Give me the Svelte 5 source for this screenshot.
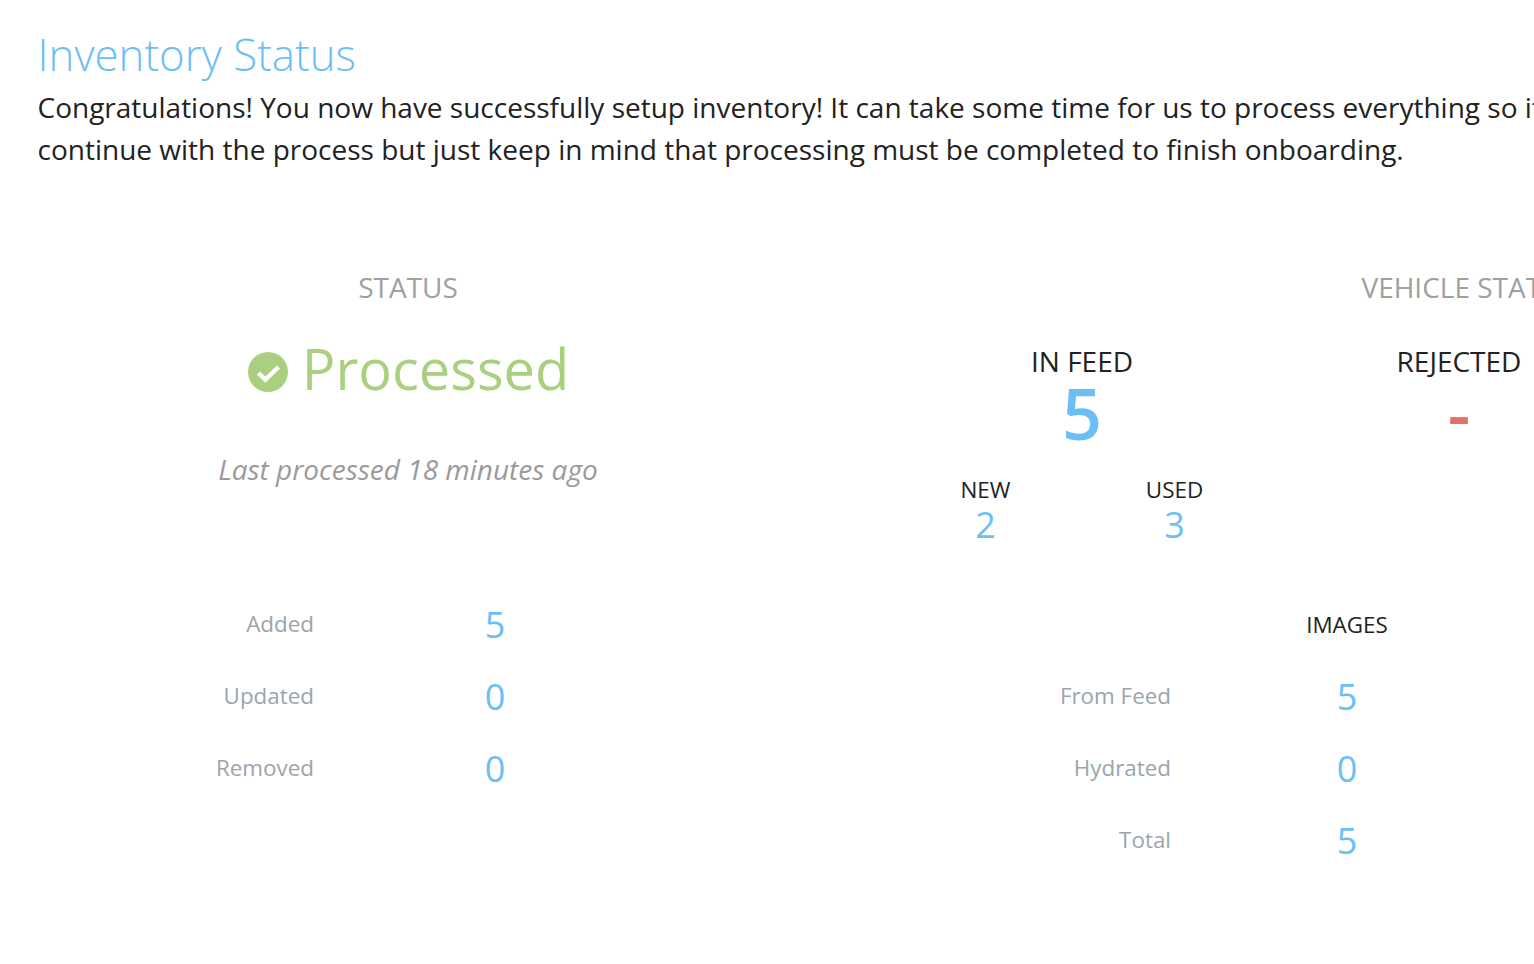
<script lang="ts">
  const summary = [
    { label: 'Added', value: 5 },
    { label: 'Updated', value: 0 },
    { label: 'Removed', value: 0 },
  ];
  const images = [
    { label: 'From Feed', value: 5 },
    { label: 'Hydrated', value: 0 },
    { label: 'Total', value: 5 },
  ];
</script>

<main class="page">
  <h1>Inventory Status</h1>
  <p class="intro">
    Congratulations! You now have successfully setup inventory! It can take some time for us to process everything so it may take a while. You can<br />
    continue with the process but just keep in mind that processing must be completed to finish onboarding.
  </p>

  <div class="columns">
    <section class="status">
      <h2>STATUS</h2>
      <div class="state">
        <svg viewBox="0 0 40 40" width="40" height="40" aria-hidden="true">
          <circle cx="20" cy="20" r="20" fill="#aad07f" />
          <path d="M10.5 21l6.8 6.6L30.5 15" fill="none" stroke="#fff" stroke-width="4.4" />
        </svg>
        <span>Processed</span>
      </div>
      <p class="last">Last processed 18 minutes ago</p>
      <div class="rows">
        {#each summary as row}
          <div class="row">
            <span class="label">{row.label}</span>
            <span class="value">{row.value}</span>
          </div>
        {/each}
      </div>
    </section>

    <section class="vehicles">
      <h2>VEHICLE STATS</h2>
      <div class="counts">
        <div class="count">
          <div class="name">IN FEED</div>
          <div class="big">5</div>
          <div class="split">
            <div><div class="small-name">NEW</div><div class="small">2</div></div>
            <div><div class="small-name">USED</div><div class="small">3</div></div>
          </div>
        </div>
        <div class="count">
          <div class="name">REJECTED</div>
          <div class="big red">-</div>
        </div>
      </div>
      <div class="images">
        <div class="images-title">IMAGES</div>
        {#each images as row}
          <div class="row">
            <span class="label">{row.label}</span>
            <span class="value">{row.value}</span>
          </div>
        {/each}
      </div>
    </section>
  </div>
</main>

<style>
  :global(body) {
    margin: 0;
    background: #fff;
    overflow: hidden;
  }

  .page {
    box-sizing: border-box;
    width: 2100px;
    height: 964px;
    padding: 27px 38px 0;
    font-family: "Open Sans", sans-serif;
    color: #222;
  }

  h1 {
    margin: 0 0 5px -0.5px;
    font-size: 43.8px;
    line-height: 54px;
    font-weight: 300;
    color: #6cbff5;
  }

  .intro {
    margin: 0 0 0 -0.5px;
    font-size: 28px;
    line-height: 42px;
    white-space: nowrap;
  }

  .columns {
    display: grid;
    grid-template-columns: 740px 1132px;
    column-gap: 115px;
    margin-top: 96px;
  }

  h2 {
    margin: 0;
    font-size: 28px;
    line-height: 42px;
    font-weight: 400;
    color: #a0a0a0;
    text-align: center;
  }

  .state {
    display: flex;
    justify-content: center;
    align-items: center;
    gap: 14px;
    margin-top: 23px;
    padding-left: 1px;
    font-size: 56px;
    line-height: 76px;
    font-weight: 400;
    color: #aad07f;
  }

  .state svg {
    margin-top: 6px;
  }

  .state span {
    position: relative;
    top: -1px;
  }

  .last {
    margin: 41px 0 0;
    text-align: center;
    font-size: 28px;
    line-height: 42px;
    font-style: italic;
    font-weight: 400;
    color: #9a9a9a;
  }

  .rows {
    margin-top: 98px;
  }

  .row {
    display: grid;
    grid-template-columns: 276px 362px;
    height: 72px;
    align-items: center;
  }

  .label {
    padding-bottom: 2px;
    text-align: right;
    font-size: 22.4px;
    color: #9aa5ad;
    font-weight: 400;
  }

  .value {
    text-align: center;
    font-size: 36px;
    font-weight: 400;
    color: #6cbff5;
  }

  .counts {
    display: grid;
    grid-template-columns: repeat(3, 377px);
    margin: 32px 0 0 0.5px;
  }

  .count {
    text-align: center;
  }

  .name {
    font-size: 28px;
    line-height: 42px;
    font-weight: 400;
  }

  .big {
    font-size: 70px;
    line-height: 62px;
    font-weight: 600;
    color: #6cbff5;
  }

  .big.red {
    color: #e76f63;
  }

  .split {
    display: grid;
    grid-template-columns: 1fr 1fr;
    margin: 31px 1.5px 0 -2.5px;
  }

  .small-name {
    font-size: 22.4px;
    line-height: 30px;
    font-weight: 400;
  }

  .small {
    font-size: 36px;
    line-height: 40px;
    font-weight: 400;
    color: #6cbff5;
  }

  .images {
    margin-top: 45px;
  }

  .images-title {
    width: 186px;
    margin-left: 361px;
    text-align: center;
    font-size: 22.4px;
    line-height: 70px;
    font-weight: 400;
  }

  .images .row {
    grid-template-columns: 278px 352px;
  }
</style>
